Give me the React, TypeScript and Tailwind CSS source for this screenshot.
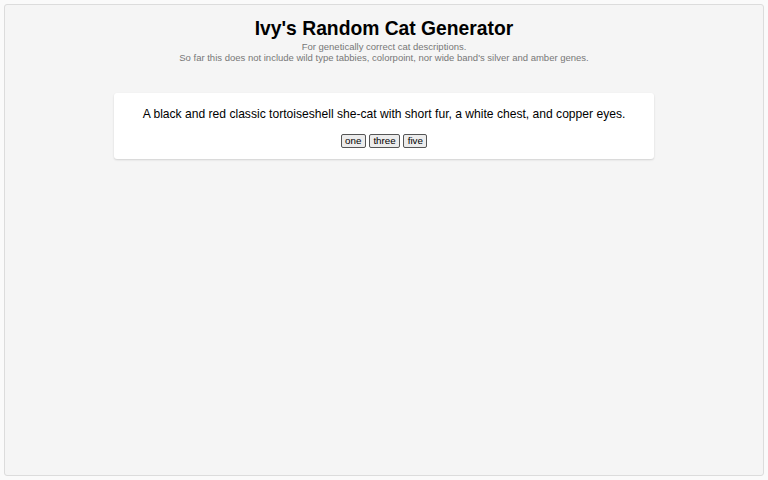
export default function App() {
  return (
    <div className="h-[480px] w-[768px] bg-[#fafafa] p-[4px]" style={{ fontFamily: '"Liberation Sans", Arial, sans-serif' }}>
      <div className="flex h-full flex-col items-center rounded-[3px] border border-[#dcdcdc] bg-[#f5f5f5]">
        <h1 className="mt-[12px] text-[19.3px] font-bold leading-[24px] text-black">Ivy's Random Cat Generator</h1>
        <p className="mt-0 text-[9.5px] leading-[11px] text-[#777]">For genetically correct cat descriptions.</p>
        <p className="text-[9.5px] leading-[11px] text-[#777]">So far this does not include wild type tabbies, colorpoint, nor wide band's silver and amber genes.</p>
        <div className="mt-[30px] flex w-[540px] flex-col items-center rounded-[3px] bg-white pb-[11px] pt-[14px] shadow-[0_1px_2px_rgba(0,0,0,0.15)]">
          <p className="text-[12.1px] leading-[15px] text-black">A black and red classic tortoiseshell she-cat with short fur, a white chest, and copper eyes.</p>
          <div className="mt-[12px] flex gap-[3px]">
            {["one", "three", "five"].map((b) => (
              <button key={b} className="h-[14px] rounded-[2px] border border-[#555] bg-[#ececec] px-[3.5px] text-[9.8px] leading-[12px] text-black">
                {b}
              </button>
            ))}
          </div>
        </div>
      </div>
    </div>
  );
}
